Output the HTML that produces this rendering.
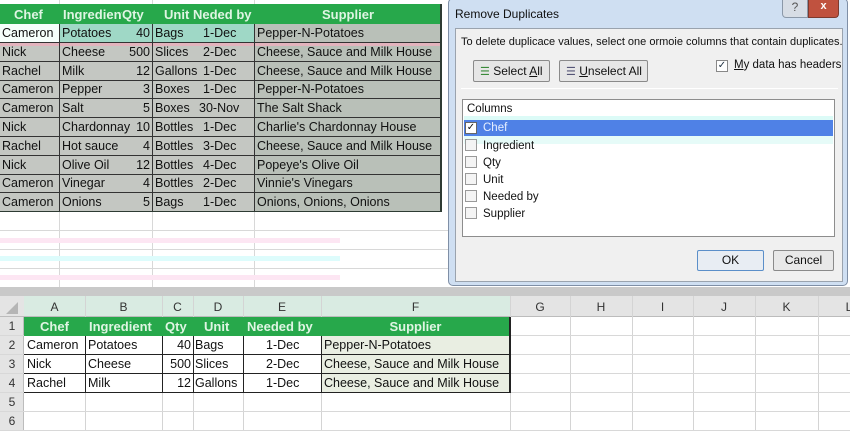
<!DOCTYPE html>
<html><head><meta charset="utf-8"><style>
*{margin:0;padding:0;box-sizing:border-box}
body{width:850px;height:430px;overflow:hidden;background:#fff;position:relative;font-family:"Liberation Sans",sans-serif;font-size:12.5px;color:#111}
.a{position:absolute;white-space:nowrap}
.vl{position:absolute;width:1px;background:#d8d8d8}
.hl{position:absolute;height:1px;background:#d8d8d8}
</style></head><body>
<div class="vl" style="left:59px;top:0;height:290px"></div>
<div class="vl" style="left:152px;top:0;height:290px"></div>
<div class="vl" style="left:254px;top:0;height:290px"></div>
<div class="hl" style="left:0;top:230px;width:448px"></div>
<div class="hl" style="left:0;top:249px;width:448px"></div>
<div class="hl" style="left:0;top:268px;width:448px"></div>
<div class="a" style="left:0;top:238px;width:340px;height:5px;background:#fde6f3"></div>
<div class="a" style="left:0;top:256px;width:340px;height:5px;background:#ddfcfc"></div>
<div class="a" style="left:0;top:275px;width:340px;height:5px;background:#fde6f3"></div>

<div class="a" style="left:0;top:4px;width:440px;height:20px;background:#27a84b"></div>
<div class="a" style="left:0;top:24px;width:440px;height:188px;background:#c4c7c2"></div>
<div class="a" style="left:255px;top:24px;width:185px;height:188px;background:#b9c0b8"></div>
<div class="a" style="left:59px;top:24px;width:195px;height:18px;background:#9fd8c6"></div>
<div class="a" style="left:0;top:24px;width:59px;height:18px;background:#f6fffc"></div>
<div class="a" style="left:0;top:42px;width:440px;height:4px;background:#e3b3bd"></div>
<div id="tt"></div>
<div class="a" style="left:0;top:211px;width:441px;height:1px;background:#2e3b33"></div>
<div class="a" style="left:440px;top:4px;width:2px;height:208px;background:#2e3b33"></div>

<div class="a" style="left:0;top:287px;width:850px;height:9px;background:#c9c9c9"></div>

<div class="a" style="left:448px;top:-2px;width:400px;height:288px;background:#cfdff2;border:1px solid #7f8fa6;border-radius:5px"></div>
<div class="a" style="left:455px;top:7px;font-size:12px">Remove Duplicates</div>
<div class="a" style="left:782px;top:0;width:26px;height:18px;background:#d7dde5;border:1px solid #8b98a8;border-top:none;border-radius:0 0 0 4px;text-align:center;font-size:12px;color:#555">?</div>
<div class="a" style="left:808px;top:0;width:31px;height:18px;background:#c0523f;border:1px solid #7d3a2e;border-top:none;border-radius:0 0 4px 0;text-align:center;font-size:11px;color:#fff;font-weight:bold">x</div>
<div class="a" style="left:455px;top:28px;width:388px;height:254px;background:#f0f0f0;border:1px solid #9aa3ae"></div>
<div class="a" style="left:461px;top:36px;font-size:11px">To delete duplicace values, select one ormoie columns that contain duplicates.</div>
<div class="a" style="left:473px;top:60px;width:77px;height:22px;background:#e6e6e6;border:1px solid #8a8a8a;border-radius:2px;font-size:12px;padding:3px 0 0 6px"><span style="color:#3a8a3a;font-size:11px">☰</span> Select <u>A</u>ll</div>
<div class="a" style="left:559px;top:60px;width:89px;height:22px;background:#e6e6e6;border:1px solid #8a8a8a;border-radius:2px;font-size:12px;padding:3px 0 0 6px"><span style="color:#557;font-size:11px">☰</span> <u>U</u>nselect All</div>
<div class="a" style="left:716px;top:60px;width:12px;height:12px;border:1px solid #888;background:#fff;font-size:10px;line-height:10px;text-align:center;color:#234">✓</div>
<div class="a" style="left:734px;top:59px;font-size:11.5px"><u>M</u>y data has headers</div>
<div class="a" style="left:461px;top:88px;width:377px;height:1px;background:#fff"></div>
<div class="a" style="left:462px;top:99px;width:373px;height:138px;background:#fff;border:1px solid #8d8d8d"></div>
<div class="a" style="left:467px;top:103px;font-size:11.5px">Columns</div>
<div class="a" style="left:464px;top:116px;width:369px;height:4px;background:#dcfbf7"></div>
<div class="a" style="left:464px;top:120px;width:369px;height:16px;background:#4f81e6"></div>
<div class="a" style="left:464px;top:136px;width:369px;height:8px;background:#e6fbf8"></div>
<div class="a" style="left:465px;top:122px;width:12px;height:12px;border:1px solid #666;background:#fff;font-size:10px;line-height:10px;text-align:center">✓</div>
<div class="a" style="left:483px;top:122px;font-size:11.5px;color:#e8f0ff">Chef</div>
<div id="ck"></div>
<div class="a" style="left:697px;top:250px;width:67px;height:21px;background:#e8edf3;border:1px solid #5b8fc9;border-radius:2px;text-align:center;font-size:12px;line-height:19px">OK</div>
<div class="a" style="left:773px;top:250px;width:61px;height:21px;background:#e8e8e8;border:1px solid #8a8a8a;border-radius:2px;text-align:center;font-size:12px;line-height:19px">Cancel</div>

<div class="a" style="left:0;top:296px;width:850px;height:21px;background:#e4e4e4;border-bottom:1px solid #bcbcbc"></div>
<div class="a" style="left:24px;top:296px;width:486px;height:21px;background:#d9ebe2;border-bottom:1px solid #bcbcbc"></div>
<div class="a" style="left:0;top:317px;width:24px;height:113px;background:#e4e4e4;border-right:1px solid #bcbcbc"></div>
<div class="a" style="left:6px;top:302px;width:0;height:0;border-left:12px solid transparent;border-bottom:12px solid #b5b5b5"></div>
<div id="bs"></div>
<script>
var tt=document.getElementById('tt'),h='';
var rows=[["Cameron","Potatoes","40","Bags","1-Dec","Pepper-N-Potatoes"],["Nick","Cheese","500","Slices","2-Dec","Cheese, Sauce and Milk House"],["Rachel","Milk","12","Gallons","1-Dec","Cheese, Sauce and Milk House"],["Cameron","Pepper","3","Boxes","1-Dec","Pepper-N-Potatoes"],["Cameron","Salt","5","Boxes","30-Nov","The Salt Shack"],["Nick","Chardonnay","10","Bottles","1-Dec","Charlie's Chardonnay House"],["Rachel","Hot sauce","4","Bottles","3-Dec","Cheese, Sauce and Milk House"],["Nick","Olive Oil","12","Bottles","4-Dec","Popeye's Olive Oil"],["Cameron","Vinegar","4","Bottles","2-Dec","Vinnie's Vinegars"],["Cameron","Onions","5","Bags","1-Dec","Onions, Onions, Onions"]];
var hd='color:#dff5e3;font-weight:bold;font-size:13px;top:7px';
h+='<div class="a" style="'+hd+';left:14px">Chef</div><div class="a" style="'+hd+';left:63px">Ingredient</div><div class="a" style="'+hd+';left:122px;background:#27a84b">Qty</div><div class="a" style="'+hd+';left:164px">Unit</div><div class="a" style="'+hd+';left:193px">Neded by</div><div class="a" style="'+hd+';left:322px">Supplier</div>';
for(var i=0;i<10;i++){var y=24+i*18.8;
h+='<div class="a" style="left:0;top:'+(y+18)+'px;width:440px;height:1px;background:#333"></div>';
var r=rows[i],ty=y+2;
h+='<div class="a" style="left:2px;top:'+ty+'px">'+r[0]+'</div><div class="a" style="left:62px;top:'+ty+'px">'+r[1]+'</div><div class="a" style="right:'+(850-150)+'px;top:'+ty+'px">'+r[2]+'</div><div class="a" style="left:155px;top:'+ty+'px">'+r[3]+'</div><div class="a" style="left:'+(r[4].length>5?199:203)+'px;top:'+ty+'px">'+r[4]+'</div><div class="a" style="left:257px;top:'+ty+'px">'+r[5]+'</div>';}
[59,152,254].forEach(function(x){h+='<div class="a" style="left:'+x+'px;top:24px;width:1px;height:188px;background:#333"></div>'});
tt.innerHTML=h;
var ck='';["Ingredient","Qty","Unit","Needed by","Supplier"].forEach(function(t,i){var y=139+i*17;ck+='<div class="a" style="left:465px;top:'+y+'px;width:12px;height:12px;border:1px solid #999;background:#f4f4f4"></div><div class="a" style="left:483px;top:'+(y+1)+'px;font-size:11.5px">'+t+'</div>'});
document.getElementById('ck').innerHTML=ck;
var b='',cx=[24,85,162,193,243,321,510,570,632,693,755,818,880],L="ABCDEFGHIJKL";
for(var i=0;i<12;i++){b+='<div class="a" style="left:'+cx[i]+'px;top:300px;width:'+(cx[i+1]-cx[i])+'px;text-align:center;font-size:12px;color:#333">'+L[i]+'</div>';
b+='<div class="vl" style="left:'+cx[i+1]+'px;top:296px;height:134px;background:#d4d4d4"></div>';}
for(var r=0;r<6;r++){var y=317+r*19;b+='<div class="a" style="left:0;top:'+(y+2)+'px;width:24px;text-align:center;font-size:12px;color:#333">'+(r+1)+'</div><div class="hl" style="left:0;top:'+(y+18)+'px;width:850px"></div>';}
b+='<div class="a" style="left:24px;top:317px;width:486px;height:19px;background:#27a84b"></div>';
var bh='color:#dff5e3;font-weight:bold;font-size:13px;top:319px';
b+='<div class="a" style="'+bh+';left:24px;width:61px;text-align:center">Chef</div><div class="a" style="'+bh+';left:89px">Ingredient</div><div class="a" style="'+bh+';left:165px">Qty</div><div class="a" style="'+bh+';left:204px">Unit</div><div class="a" style="'+bh+';left:247px">Needed by</div><div class="a" style="'+bh+';left:321px;width:189px;text-align:center">Supplier</div>';
b+='<div class="a" style="left:24px;top:336px;width:297px;height:57px;background:#fff"></div><div class="a" style="left:321px;top:336px;width:189px;height:57px;background:#e9eee2"></div>';
var br=[["Cameron","Potatoes","40","Bags","1-Dec","Pepper-N-Potatoes"],["Nick","Cheese","500","Slices","2-Dec","Cheese, Sauce and Milk House"],["Rachel","Milk","12","Gallons","1-Dec","Cheese, Sauce and Milk House"]];
for(var r=0;r<3;r++){var y=336+r*19,t=y+2;
b+='<div class="a" style="left:24px;top:'+(y+18)+'px;width:486px;height:1px;background:#222"></div>';
var d=br[r];b+='<div class="a" style="left:27px;top:'+t+'px">'+d[0]+'</div><div class="a" style="left:88px;top:'+t+'px">'+d[1]+'</div><div class="a" style="right:'+(850-191)+'px;top:'+t+'px">'+d[2]+'</div><div class="a" style="left:195px;top:'+t+'px">'+d[3]+'</div><div class="a" style="left:266px;top:'+t+'px">'+d[4]+'</div><div class="a" style="left:324px;top:'+t+'px">'+d[5]+'</div>';}
[85,162,193,243,321].forEach(function(x){b+='<div class="a" style="left:'+x+'px;top:336px;width:1px;height:57px;background:#222"></div>'});
b+='<div class="a" style="left:509px;top:317px;width:2px;height:76px;background:#222"></div>';
document.getElementById('bs').innerHTML=b;
</script>
</body></html>
